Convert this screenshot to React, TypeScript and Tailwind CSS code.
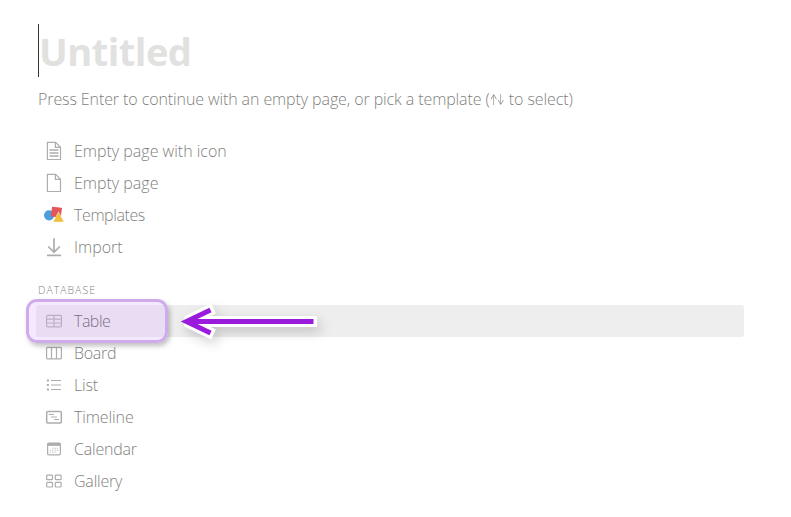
import React from 'react';

type Item = {
  label: string;
  icon: React.ReactNode;
  tracking: string;
};

const Icon = ({ children }: { children: React.ReactNode }) => (
  <svg
    width="20"
    height="20"
    viewBox="0 0 20 20"
    fill="none"
    stroke="#adadac"
    strokeWidth="1.2"
    className="shrink-0"
  >
    {children}
  </svg>
);

const pageItems: Item[] = [
  {
    label: 'Empty page with icon',
    tracking: 'tracking-[0px]',
    icon: (
      <Icon>
        <path d="M3.4 1.4h8.2l4.9 4.9v12.2H3.4zM11.4 1.4v5h5" />
        <path d="M5.5 9h9M5.5 12h9M5.5 15h9" strokeWidth="1.5" />
      </Icon>
    ),
  },
  {
    label: 'Empty page',
    tracking: 'tracking-[0px]',
    icon: (
      <Icon>
        <path d="M3.4 1.4h8.2l4.9 4.9v12.2H3.4zM11.4 1.4v5h5" />
      </Icon>
    ),
  },
  {
    label: 'Templates',
    tracking: 'tracking-[-0.4px]',
    icon: (
      <Icon>
        <circle cx="5.1" cy="10.3" r="5.1" fill="#4a9fdf" stroke="none" />
        <rect x="7.4" y="2.2" width="10" height="10" rx="0.6" transform="rotate(8 12.4 7.2)" fill="#e2565b" stroke="none" />
        <path d="M14.5 6.8L20 17H9z" fill="#f3bd3e" stroke="#fff" strokeWidth="0.4" />
      </Icon>
    ),
  },
  {
    label: 'Import',
    tracking: 'tracking-[0px]',
    icon: (
      <Icon>
        <path d="M10 1.2v14M4.2 9.5l5.8 5.7 5.8-5.7M3 18.3h14" strokeWidth="1.7" />
      </Icon>
    ),
  },
];

const databaseItems: Item[] = [
  {
    label: 'Table',
    tracking: 'tracking-[-0.5px]',
    icon: (
      <Icon>
        <rect x="2.6" y="4.4" width="14.8" height="11.4" rx="1" />
        <path d="M2.6 8.2h14.8M2.6 12h14.8M10 4.4v11.4" />
      </Icon>
    ),
  },
  {
    label: 'Board',
    tracking: 'tracking-[-0.3px]',
    icon: (
      <Icon>
        <rect x="2.6" y="4.4" width="14.8" height="11.4" rx="0.8" />
        <path d="M7.5 4.4v11.4M12.5 4.4v11.4" />
      </Icon>
    ),
  },
  {
    label: 'List',
    tracking: 'tracking-[-0.2px]',
    icon: (
      <Icon>
        <path d="M2.9 5.5h2M2.9 10h2M2.9 14.5h2" strokeWidth="1.8" />
        <path d="M7 5.5h10M7 10h10M7 14.5h10" />
      </Icon>
    ),
  },
  {
    label: 'Timeline',
    tracking: 'tracking-[-0.1px]',
    icon: (
      <Icon>
        <rect x="2.7" y="4.5" width="14.6" height="11.4" rx="1" strokeWidth="1.5" />
        <path d="M4.8 7.5h5M7 10h6M10 12.5h5" />
      </Icon>
    ),
  },
  {
    label: 'Calendar',
    tracking: 'tracking-[-0.2px]',
    icon: (
      <Icon>
        <rect x="3.6" y="4.1" width="12.8" height="11.8" rx="1.4" />
        <path d="M3.6 5.4h12.8" strokeWidth="3" />
        <path d="M8.2 9.3h6M5.6 11.3h8.6M5.6 13.3h6" strokeDasharray="1.4 1" strokeWidth="1.1" opacity="0.75" />
      </Icon>
    ),
  },
  {
    label: 'Gallery',
    tracking: 'tracking-[-0.2px]',
    icon: (
      <Icon>
        <rect x="2.7" y="4.1" width="5.8" height="4.6" rx="0.8" />
        <rect x="11.3" y="4.1" width="5.8" height="4.6" rx="0.8" />
        <rect x="2.7" y="11.4" width="5.8" height="4.6" rx="0.8" />
        <rect x="11.3" y="11.4" width="5.8" height="4.6" rx="0.8" />
      </Icon>
    ),
  },
];

function Row({ item, selected = false }: { item: Item; selected?: boolean }) {
  return (
    <li
      className={
        selected
          ? 'relative flex h-8 items-center gap-2.5 rounded-[3px] bg-[#eeeeee] pl-2 text-[#50504f]'
          : 'flex h-8 items-center gap-2.5 pl-2'
      }
    >
      {item.icon}
      <span className={`whitespace-nowrap ${item.tracking}`}>{item.label}</span>
      {selected && <Callout />}
    </li>
  );
}

function Callout() {
  return (
    <>
      <div className="absolute -left-[10px] -top-[6px] h-[44px] w-[142px] rounded-[11px] border-[3px] border-[#d0abec] bg-[#dfb6ff]/30 shadow-[2px_3px_5px_rgba(0,0,0,0.25)]" />
      <svg
        width="160"
        height="64"
        viewBox="0 0 160 64"
        fill="none"
        className="absolute left-[132px] -top-[15px] drop-shadow-[3px_5px_6px_rgba(0,0,0,0.18)]"
      >
        <path d="M45.5 18.5L18.5 31.5L45.5 44.5M20 31.5H149" stroke="#fff" strokeWidth="11" strokeLinejoin="bevel" />
        <path d="M42.5 20L18.5 31.5L42.5 43M20 31.5H145.5" stroke="#9a1bdb" strokeWidth="5" />
      </svg>
    </>
  );
}

export default function App() {
  return (
    <div className="h-[517px] w-[791px] overflow-hidden bg-white pl-[38px] pt-6 font-['Open_Sans',sans-serif] text-base font-light text-[#7f7f7e]">
      <h1 className="flex h-[53px] w-fit items-center border-l border-[#333] text-[38px] font-bold leading-none tracking-[-0.5px] text-[#e1e1e0]">
        Untitled
      </h1>
      <p className="mt-[10px] h-6 whitespace-nowrap leading-6 tracking-[-0.1px]">
        Press Enter to continue with an empty page, or pick a template (
        <span className="inline-flex w-[15px] font-['Inter',sans-serif] text-[15px] tracking-normal">
          <span className="w-[7.5px] origin-left scale-x-[0.6]">↑</span>
          <span className="w-[7.5px] origin-left scale-x-[0.6]">↓</span>
        </span>
        {' '}to select)
      </p>

      <ul className="-ml-0.5 mt-6 w-[708px]">
        {pageItems.map((item) => (
          <Row key={item.label} item={item} />
        ))}
      </ul>

      <h2 className="mb-[3px] mt-[15px] h-6 text-[10.5px] leading-6 tracking-[1px]">DATABASE</h2>
      <ul className="-ml-0.5 w-[708px]">
        {databaseItems.map((item) => (
          <Row key={item.label} item={item} selected={item.label === 'Table'} />
        ))}
      </ul>
    </div>
  );
}
